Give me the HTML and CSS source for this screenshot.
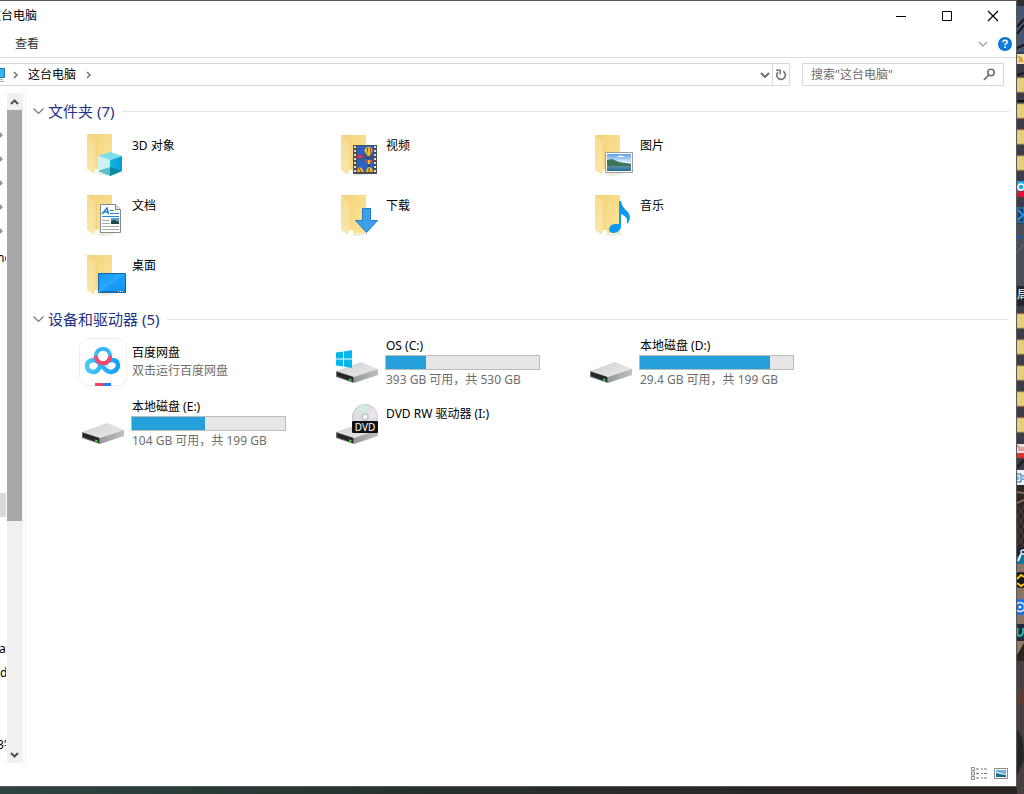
FILE: index.html
```html
<!DOCTYPE html>
<html lang="zh-CN">
<head>
<meta charset="utf-8">
<title>这台电脑</title>
<link rel="stylesheet" href="styles.css">
</head>
<body>
<svg class="defs" aria-hidden="true">
  <defs>
    <linearGradient id="gFolder" x1="0" y1="0" x2="1" y2="1"><stop offset="0" stop-color="#f3d27b"/><stop offset="1" stop-color="#ffe699"/></linearGradient>
    <linearGradient id="gFlap" x1="0" y1="0" x2="0" y2="1"><stop offset="0" stop-color="#f6dc8f"/><stop offset="1" stop-color="#fbe7a9"/></linearGradient>
    <linearGradient id="gTop" x1="0" y1="0" x2="1" y2="1"><stop offset="0" stop-color="#cfd0d3"/><stop offset="1" stop-color="#ececee"/></linearGradient>
    <linearGradient id="gSide" x1="0" y1="0" x2="1" y2="0"><stop offset="0" stop-color="#97989b"/><stop offset="1" stop-color="#bfc0c2"/></linearGradient>
    <linearGradient id="gScreen" x1="0" y1="0" x2="1" y2="1"><stop offset="0" stop-color="#1593f5"/><stop offset=".5" stop-color="#29a9ff"/><stop offset=".52" stop-color="#1a9dfc"/><stop offset="1" stop-color="#1590f0"/></linearGradient>
    <linearGradient id="gSky" x1="0" y1="0" x2="0" y2="1"><stop offset="0" stop-color="#5c9eea"/><stop offset=".5" stop-color="#e2f1fb"/><stop offset=".7" stop-color="#5c94ac"/><stop offset="1" stop-color="#286792"/></linearGradient>
    <linearGradient id="gPan" x1="0" y1="0" x2="1" y2="0"><stop offset="0" stop-color="#45c9fa"/><stop offset="1" stop-color="#159dfc"/></linearGradient>
    <linearGradient id="gCubeR" x1="0" y1="0" x2="1" y2="0"><stop offset="0" stop-color="#12b9d6"/><stop offset="1" stop-color="#0a97da"/></linearGradient>
    <g id="folder">
      <path d="M16 44l17-2 4 1-13 2z" fill="#e8e8e8"/>
      <path d="M8 4h25v38l-17 1z" fill="url(#gFolder)"/>
      <path d="M16 39h4v4l-4 1z" fill="#fffdf5"/>
      <path d="M8 4l9 8v26l-2 2v4l-7-5z" fill="url(#gFlap)"/>
      <path d="M17 12v26" stroke="#ebc766" stroke-width=".6"/>
    </g>
    <g id="drive">
      <path d="M3 32l25-9 17 7-24 9z" fill="url(#gTop)"/>
      <path d="M21 38l24-8v6l-24 8z" fill="url(#gSide)"/>
      <path d="M3 32l18 6v6L3 38z" fill="#6f7072"/>
      <path d="M4 33l16 5v5L4 37z" fill="#252627"/>
      <path d="M16 39.500l2.500.6v2l-2.500-.6z" fill="#2fe03d"/>
    </g>
  </defs>
</svg>
<div class="desktop">
  <svg class="wallpaper" viewBox="0 0 7 794" preserveAspectRatio="none" aria-hidden="true">
    <rect width="7" height="794" fill="#3b3d4a"/>
    <path d="M0 0h7v52H0z" fill="#465670"/><path d="M0 0h7v6H0z" fill="#302d30"/>
    <path d="M0 27l7-8M0 34l7-9M0 48l7-3M0 101h7M0 75l7-2" stroke="#14151b" stroke-width="2"/>
    <rect y="54" width="7" height="10" fill="#eee1bb"/><path d="M1 56l5 6M5 57l-3 5" stroke="#dc9e2e" stroke-width="2"/>
    <g fill="#e6ce7e" stroke="#cba74f" stroke-width="1">
      <path d="M-1 78h9v14h-9zM-1 104h9v14h-9zM-1 130h9v14h-9zM-1 156h9v14h-9zM-1 314h9v14h-9zM-1 340h9v14h-9zM-1 366h9v14h-9zM-1 392h9v14h-9zM-1 418h9v14h-9z"/>
    </g>
    <rect y="181" width="7" height="10" fill="#18aae4"/><rect y="191" width="7" height="6" fill="#d81432"/><circle cx="4" cy="187" r="3" fill="none" stroke="#fff" stroke-width="1.500"/>
    <rect y="208" width="7" height="14" fill="#173960" stroke="#1ba1f0"/><path d="M1 210l5 5-5 5" stroke="#2997f0" stroke-width="2" fill="none"/>
    <path d="M0 224h7v62H0z" fill="#4c4e57"/><circle cx="2" cy="237" r="2" fill="#1559c1"/><path d="M0 252l7-7" stroke="#72747b"/>
    <rect y="286" width="7" height="20" fill="#24252a"/>
    <rect y="444" width="7" height="9" fill="#e9e5e5"/><rect y="453" width="7" height="5" fill="#e02f2d"/><path d="M0 446h2v5m2-4v4m2-4v4" stroke="#d35b5b" fill="none"/>
    <path d="M0 468l7-8" stroke="#222" stroke-width="3"/><rect y="470" width="7" height="15" fill="#eef2f7"/><path d="M0 474h4v8H0M5 476h2m-2 3h2M1 476v4" stroke="#2365b4" fill="none"/>
    <rect y="485" width="7" height="63" fill="#2d2729"/><path d="M0 492l7 1M0 503l7-3" stroke="#8f6852" stroke-width="2"/><path d="M0 506l7 10-7 10 7 10-7 10M7 506l-7 10 7 10-7 10 7 10" stroke="#614333" fill="none"/>
    <path d="M0 548h7v16H0z" fill="#147399"/><path d="M0 548h7v5l-7 4z" fill="#1b2342"/><path d="M1 561l3-7" stroke="#e0eef5" stroke-width="2"/><circle cx="6" cy="552" r="2" fill="none" stroke="#e0eef5" stroke-width="1.500"/>
    <path d="M0 564h7v60H0z" fill="#8d7362"/><circle cx="4" cy="580" r="8" fill="#171718"/><path d="M0 579l4-4 3 2M0 583l4 3 3-2" stroke="#f6c416" stroke-width="2" fill="none"/>
    <circle cx="3" cy="607" r="8" fill="#1a71e4"/><circle cx="3" cy="607" r="4.500" fill="none" stroke="#e3f1ff" stroke-width="1.500"/><circle cx="3" cy="607" r="1.500" fill="#e3f1ff"/>
    <rect y="624" width="7" height="17" fill="#232a3b"/><path d="M1 628q-2 8 2 8 4-1 3-8" fill="none" stroke="#26b7a7" stroke-width="2"/>
    <path d="M0 641h7v20H0z" fill="#947966"/><path d="M0 655l7-12v20H0z" fill="#2e211f"/>
    <path d="M0 661h7v133H0z" fill="#483e40"/><path d="M0 690h7v14H0z" fill="#5b3c33"/><path d="M0 730q7 5 7 30l-7 15z" fill="#26262a"/>
  </svg>
  <span class="desk-label">局</span>

  <div class="window">
    <header class="titlebar">
      <h1 class="title">这台电脑</h1>
      <div class="caption">
        <button class="cap-btn" aria-label="最小化"><svg width="12" height="12"><path d="M1 6.500h10" stroke="#000"/></svg></button>
        <button class="cap-btn" aria-label="最大化"><svg width="12" height="12"><path d="M1.500 1.500h9v9h-9z" fill="none" stroke="#000"/></svg></button>
        <button class="cap-btn" aria-label="关闭"><svg width="12" height="12"><path d="M1 1l10 10M11 1L1 11" stroke="#000" stroke-width="1.200"/></svg></button>
      </div>
    </header>

    <div class="menubar">
      <button class="tab">查看</button>
      <div class="menu-tools">
        <button class="icon-btn" aria-label="展开功能区"><svg width="10" height="8"><path d="M1 2l4 4 4-4" fill="none" stroke="#a5a5a5" stroke-width="1.500"/></svg></button>
        <button class="icon-btn" aria-label="帮助"><svg width="14" height="14"><circle cx="7" cy="7" r="7" fill="#0a6fca"/><circle cx="7" cy="7" r="5.800" fill="#0e7fdc"/><path d="M5 5.300q0-2 2.100-2t2.100 1.700q0 1-1.100 1.600T7 8.300" fill="none" stroke="#fff" stroke-width="1.500"/><path d="M6.200 9.500h1.600v1.500H6.200z" fill="#fff"/></svg></button>
      </div>
    </div>

    <div class="navbar">
      <div class="address">
        <svg class="pc" width="16" height="16"><path d="M.5 1.500h15v9H.5z" fill="#35b4f7" stroke="#27719f"/><path d="M4 14.500h11M8 12.500h6" stroke="#9eb0bd"/></svg>
        <svg class="sep" width="6" height="10"><path d="M1 2l3 3-3 3" fill="none" stroke="#777" stroke-width="1.600"/></svg>
        <button class="crumb">这台电脑</button>
        <svg class="sep" width="6" height="10"><path d="M1 2l3 3-3 3" fill="none" stroke="#777" stroke-width="1.600"/></svg>
        <button class="icon-btn drop" aria-label="历史位置"><svg width="10" height="8"><path d="M1 2l4 4 4-4" fill="none" stroke="#666" stroke-width="1.900"/></svg></button>
        <button class="icon-btn refresh" aria-label="刷新"><svg width="12" height="13"><path d="M8.200 3.300A4.300 4.300 0 1 1 3 4" fill="none" stroke="#767676" stroke-width="1.700"/><path d="M1 2.300h4.200v4.200" fill="none" stroke="#767676" stroke-width="1.500"/></svg></button>
      </div>
      <form class="search">
        <input type="search" aria-label="搜索" placeholder='搜索"这台电脑"'>
        <button type="button" class="icon-btn" aria-label="搜索"><svg width="13" height="13"><circle cx="8" cy="4.500" r="3.200" fill="none" stroke="#707070" stroke-width="1.600"/><path d="M5.700 7L1 12" stroke="#707070" stroke-width="1.800"/></svg></button>
      </form>
    </div>

    <div class="body">
      <nav class="tree" aria-label="导航窗格">
        <span class="row pin"></span><span class="row pin"></span><span class="row pin"></span><span class="row pin"></span><span class="row pin"></span>
        <a class="row first" href="#">ne</a>
        <a class="row selected" href="#" aria-label="这台电脑"></a>
        <a class="row after-gap" href="#">a</a>
        <a class="row" href="#">d</a>
        <a class="row last" href="#">3学</a>
      </nav>
      <div class="scrollbar">
        <button class="sb-btn" aria-label="向上"><svg width="9" height="8"><path d="M1 6l3.500-3.500L8 6" fill="none" stroke="#505050" stroke-width="2"/></svg></button>
        <div class="track"><div class="thumb" style="height:64.6%"></div></div>
        <button class="sb-btn" aria-label="向下"><svg width="9" height="8"><path d="M1 2l3.500 3.500L8 2" fill="none" stroke="#505050" stroke-width="2"/></svg></button>
      </div>

      <main class="content">
        <section>
          <h2 class="group"><svg width="11" height="8"><path d="M.5 1.500l5 5 5-5" fill="none" stroke="#777" stroke-width="1.200"/></svg>文件夹 (7)</h2>
          <ul class="grid folders">
            <li class="item"><svg class="icon" viewBox="0 0 48 48"><use href="#folder" y="-1"/><path d="M19 25l12-4 12 4-12 4z" fill="#7ddfe8"/><path d="M19 25l12 4v16l-12-5z" fill="#cdf0f3"/><path d="M31 29l12-4v15l-12 5z" fill="url(#gCubeR)"/><path d="M19 40l12-4v9z" fill="#5cc0c6"/><path d="M31 36l12 4-12 5z" fill="#0a8ba6"/></svg><span class="name">3D 对象</span></li>
            <li class="item"><svg class="icon" viewBox="0 0 48 48"><use href="#folder"/><path d="M20 14h24v29H20z" fill="#4b4d50"/><path d="M22 15v27M42 15v27" stroke="#e1e1e1" stroke-width="2" stroke-dasharray="2 2"/><path d="M24 15h16v12H24zM24 28h16v13H24z" fill="#2a63c4"/><path d="M24 23h16v4H24z" fill="#3c4f8e"/><path d="M31.500 20a4 4 0 0 1 8 0l-3 5h-2z" fill="#e9c72d"/><path d="M33.500 17h1.500v7zM37 17h1v4l-1 2z" fill="#d8371f"/><path d="M24 26q2-5 6-1l1 2h-7z" fill="#cf3567"/><path d="M32 29h8q-1 3-3 4h-2z" fill="#d94a2b"/><path d="M35 29h2v4h-2z" fill="#efbe2c"/><path d="M35.500 34h1.500v2h-1.500z" fill="#3c2a29"/><path d="M24 41l1-4q4-2 5 2l1 2zM33 41q0-5 4-5 3 1 3 5z" fill="#dab62f"/><path d="M26 37l2 4M36 37v4" stroke="#b8344f"/></svg><span class="name">视频</span></li>
            <li class="item"><svg class="icon" viewBox="0 0 48 48"><use href="#folder"/><path d="M18.500 21.500h27v20h-27z" fill="#fff" stroke="#9b9da0"/><path d="M20 23h24v17H20z" fill="url(#gSky)"/><path d="M20 29l5-1 7 3 12 2v2H20z" fill="#3d745b"/><path d="M30 26q4-3 8 0z" fill="#fff"/></svg><span class="name">图片</span></li>
            <li class="item"><svg class="icon" viewBox="0 0 48 48"><use href="#folder"/><path d="M21.500 13.500h15l5 5v23h-20z" fill="#fcfdfd" stroke="#868a8e"/><path d="M36.500 13.500v5h5" fill="#e0e2e4" stroke="#868a8e"/><path d="M23 23l5-6 1.500 6m-4.500-2h4" fill="none" stroke="#237fc8" stroke-width="1.500"/><path d="M31 19.500h4M31 22.500h9M23 25.500h17" stroke="#258bd4"/><path d="M23 29.500h8M23 32.500h8M23 35.500h17M23 38.500h17" stroke="#a9abad"/><path d="M32 27h8v6h-8z" fill="#5b9ccc"/><path d="M32 30l3-1 5 2v2h-8z" fill="#24473f"/></svg><span class="name">文档</span></li>
            <li class="item"><svg class="icon" viewBox="0 0 48 48"><use href="#folder"/><path d="M29.500 17.500h8v12h7l-11 12-11-12h7z" fill="#3e9fea" stroke="#227cc9"/></svg><span class="name">下载</span></li>
            <li class="item"><svg class="icon" viewBox="0 0 48 48"><use href="#folder"/><path d="M32 10h2q1 6 6 10 6 6 0 13 1-8-6-10v13q-1 5-7 6-5 0-5-4 1-5 7-5h3z" fill="#0d98f1"/></svg><span class="name">音乐</span></li>
            <li class="item"><svg class="icon" viewBox="0 0 48 48"><use href="#folder"/><path d="M19.500 22.500h27v19h-27z" fill="url(#gScreen)" stroke="#1268a7"/><path d="M20 40.500h26" stroke="#1070b4"/><path d="M20 40.500h2M39 40.500h6" stroke="#fff" stroke-dasharray="1 1"/></svg><span class="name">桌面</span></li>
          </ul>
        </section>

        <section>
          <h2 class="group"><svg width="11" height="8"><path d="M.5 1.500l5 5 5-5" fill="none" stroke="#777" stroke-width="1.200"/></svg>设备和驱动器 (5)</h2>
          <ul class="grid drives">
            <li class="item app"><svg class="icon" viewBox="0 0 48 48"><rect x=".5" y=".5" width="47" height="47" rx="9" fill="#fff" stroke="#eee"/><path d="M22 25q-2 9-8 9-6-1-6-6t6-6q4 0 7 4l4 4q3 4 7 4 6-1 7-6 0-6-6-6-5 0-7 5" fill="none" stroke="url(#gPan)" stroke-width="4.500"/><circle cx="24" cy="18" r="7.200" fill="#fff" stroke="#35b9fb" stroke-width="4"/><path d="M16.800 18a7.200 7.200 0 0 0 14.400 0" fill="none" stroke="#fb4669" stroke-width="4"/><path d="M16 45h8v3h-8z" fill="#f84365"/><path d="M24 45h8v3h-8z" fill="#267ff7"/></svg><div class="info"><span class="name">百度网盘</span><span class="sub">双击运行百度网盘</span></div></li>
            <li class="item"><svg class="icon" viewBox="0 0 48 48"><use href="#drive" y="1"/><path d="M3 14.500l7-1v7H3zM11 13.400l8-1.400v8.500h-8zM3 21.500h7v7l-7-1zM11 21.500h8V30l-8-1.400z" fill="#08b6ee"/></svg><div class="info"><span class="name">OS (C:)</span><div class="bar" role="progressbar" aria-label="OS (C:)" aria-valuenow="26"><div class="fill" style="width:26%"></div></div><span class="sub">393 GB 可用，共 530 GB</span></div></li>
            <li class="item"><svg class="icon" viewBox="0 0 48 48"><use href="#drive" y="1"/></svg><div class="info"><span class="name">本地磁盘 (D:)</span><div class="bar" role="progressbar" aria-label="本地磁盘 (D:)" aria-valuenow="85"><div class="fill" style="width:85%"></div></div><span class="sub">29.4 GB 可用，共 199 GB</span></div></li>
            <li class="item"><svg class="icon" viewBox="0 0 48 48"><use href="#drive" y="1"/></svg><div class="info"><span class="name">本地磁盘 (E:)</span><div class="bar" role="progressbar" aria-label="本地磁盘 (E:)" aria-valuenow="48"><div class="fill" style="width:48%"></div></div><span class="sub">104 GB 可用，共 199 GB</span></div></li>
            <li class="item"><svg class="icon" viewBox="0 0 48 48"><use href="#drive" y="1"/><circle cx="32" cy="18" r="12.500" fill="#dddfe1" stroke="#bfc2c5"/><path d="M32 18L24 9q5-4 10-3z" fill="#d1efd8"/><path d="M32 18l9-8q4 5 3 9z" fill="#eee2f2"/><circle cx="32" cy="18" r="4" fill="#c7cacc"/><circle cx="32" cy="18" r="2" fill="#fff"/><rect x="19" y="22" width="26" height="12" rx="1" fill="#111"/><text x="32" y="32" class="dvd">DVD</text></svg><div class="info"><span class="name dvd-name">DVD RW 驱动器 (I:)</span></div></li>
          </ul>
        </section>
      </main>
    </div>

    <footer class="status">
      <button class="icon-btn" aria-label="详细信息"><svg width="16" height="13"><path d="M.5.500h3v3h-3zM.5 5h3v3h-3zM.5 9.500h3v3h-3z" fill="#fff" stroke="#888"/><path d="M5 2h3M5 6.500h3M5 11h3M10 2h2M13 2h3M10 6.500h2M13 6.500h3M10 11h2M13 11h3" stroke="#777"/></svg></button>
      <button class="icon-btn" aria-label="大图标"><svg width="14" height="11"><path d="M.5.500h13v10H.5z" fill="#fff" stroke="#8b8b8b"/><path d="M2 2h10v7H2z" fill="#6fb3e6"/><path d="M2 4l10 2v1H2z" fill="#e8f4f4"/><path d="M2 5l4 1 6 1v2H2z" fill="#1f6e88"/></svg></button>
    </footer>
  </div>
</div>
</body>
</html>
```
FILE: styles.css
```css
* { box-sizing: border-box; }
body {
  margin: 0;
  font: 12px/16px "Noto Sans", "Noto Sans CJK SC", sans-serif;
  color: #000;
}
.defs { position: absolute; width: 0; height: 0; }
button {
  font: inherit;
  color: inherit;
  background: none;
  border: 0;
  padding: 0;
}
svg { display: block; flex: none; }

.desktop {
  position: relative;
  height: 100vh;
  padding: 0 7px 7px 0;
  background: linear-gradient(90deg, #2d4440, #26302f 40%, #2a2423 85%);
  overflow: hidden;
}
.wallpaper { position: absolute; top: 0; right: 0; width: 7px; height: 100%; }
.desk-label {
  position: absolute;
  top: 287px;
  right: 0;
  width: 7px;
  overflow: hidden;
  color: #fff;
}
.window {
  height: 100%;
  display: flex;
  flex-direction: column;
  background: #fff;
  border: 1px solid #57585a;
  border-left: 0;
}

.titlebar { display: flex; justify-content: space-between; height: 30px; }
.title { margin: 0 0 0 -11px; font: inherit; line-height: 30px; }
.caption { display: flex; }
.cap-btn { width: 46px; display: grid; place-items: center; }
.icon-btn { display: grid; place-items: center; }

.menubar {
  display: flex;
  justify-content: space-between;
  height: 27px;
  padding: 0 4px 0 15px;
  border-bottom: 1px solid #dcdcdc;
  color: #333;
}
.menu-tools { display: flex; gap: 10px; align-items: center; }

.navbar { display: flex; gap: 12px; padding: 5px 12px 6px 0; }
.address {
  flex: 1;
  display: flex;
  align-items: center;
  height: 23px;
  border: 1px solid #d9d9d9;
  border-left: 0;
}
.pc { margin-left: -11px; }
.sep { margin: 0 9px 0 8px; }
.crumb { white-space: nowrap; padding-right: 2px; }
.drop { width: 15px; height: 100%; margin-left: auto; }
.refresh { width: 17px; height: 100%; border-left: 1px solid #d9d9d9; }
.search {
  display: flex;
  align-items: center;
  width: 202px;
  padding: 0 7px 0 8px;
  border: 1px solid #d9d9d9;
}
.search input {
  flex: 1;
  min-width: 0;
  padding: 0;
  border: 0;
  outline: 0;
  font: inherit;
  background: none;
}
.search input::placeholder { color: #6d6d6d; opacity: 1; }

.body { flex: 1; display: flex; min-height: 0; padding-top: 1px; }
.tree { width: 7px; padding-top: 30px; overflow: hidden; }
.row {
  display: block;
  height: 24px;
  width: 6px;
  overflow: hidden;
  color: #000;
  line-height: 24px;
  text-decoration: none;
  text-indent: -3px;
  white-space: nowrap;
}
.pin::before {
  content: "";
  display: block;
  width: 3px;
  margin-top: 9px;
  border: solid transparent;
  border-width: 3px 0 3px 3px;
  border-left-color: #8a98a5;
}
.first { margin-top: 3px; }
.selected { margin-top: 223px; background: #d9d9d9; }
.after-gap { margin-top: 120px; text-indent: -1px; }
.after-gap + .row { text-indent: 0; }
.last { margin-top: 48px; }

.scrollbar { width: 16px; display: flex; flex-direction: column; background: #f0f0f0; }
.sb-btn { width: 15px; height: 17px; display: grid; place-items: center; }
.track { flex: 1; }
.thumb { width: 15px; background: #a8a8a8; }

.content {
  flex: 1;
  min-width: 0;
  margin-left: 2px;
  padding: 8px 7px 0 7px;
  border-left: 1px solid #f0f0f0;
}
.group {
  display: flex;
  align-items: center;
  margin: 0;
  font-size: 15px;
  font-weight: 400;
  line-height: 20px;
  color: #1e3287;
}
.group svg { margin-right: 4px; }
.group::after {
  content: "";
  flex: 1;
  height: 1px;
  margin-left: 8px;
  background: #e2e2e2;
}
.grid {
  display: grid;
  grid-template-columns: repeat(auto-fill, 254px);
  margin: 0;
  padding: 0 0 0 46px;
  list-style: none;
}
.folders { grid-auto-rows: 48px; row-gap: 12px; padding-top: 10px; padding-bottom: 10px; }
.drives { grid-auto-rows: 61px; padding-top: 9px; }
.item { display: flex; gap: 4px; }
.icon { width: 48px; height: 48px; }
.name, .sub { padding-left: 1px; }
.folders .name { padding-top: 7px; }
.info { display: flex; flex-direction: column; width: 155px; white-space: nowrap; }
.app .info { padding-top: 7px; }
.app .sub { margin-top: 2px; }
.sub { color: #6d6d6d; }
.bar {
  height: 15px;
  margin: 1px 0 2px;
  border: 1px solid #bcbcbc;
  background: #e6e6e6;
}
.fill { height: 100%; background: #26a0da; }
.dvd-name { padding-top: 7px; }
.dvd { font: 10px "Noto Sans", sans-serif; fill: #fff; text-anchor: middle; }

.status {
  display: flex;
  justify-content: flex-end;
  align-items: center;
  gap: 7px;
  height: 23px;
  padding: 0 8px 2px 0;
}
```
